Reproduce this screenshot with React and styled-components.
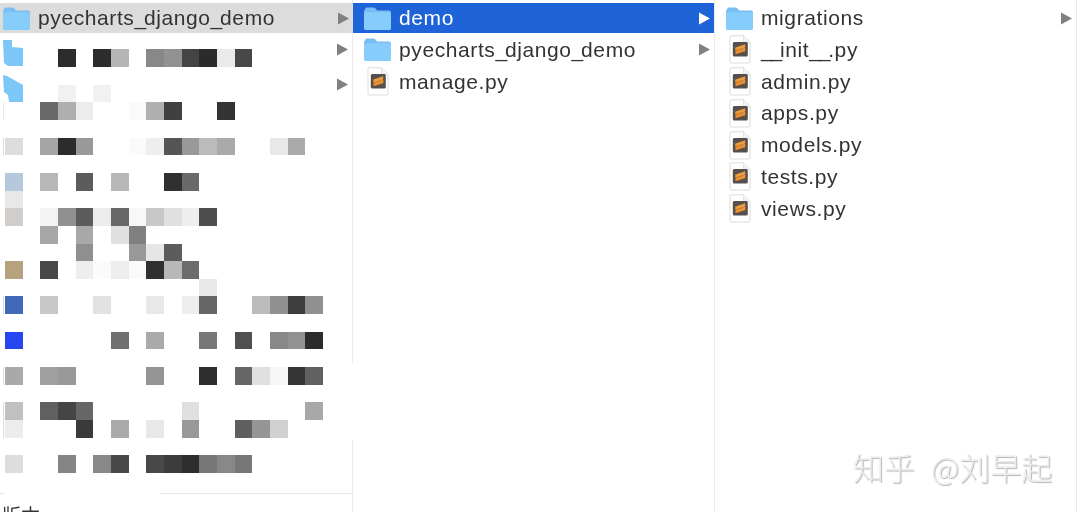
import React from "react";
import styled, { createGlobalStyle } from "styled-components";

const Global = createGlobalStyle`
  html, body { margin: 0; padding: 0; background: #fff; }
  #root { width: 1080px; height: 512px; overflow: hidden; }
`;

const Browser = styled.div`
  position: relative;
  display: flex;
  width: 1080px;
  height: 512px;
  overflow: hidden;
  background: #fff;
  font-family: "Liberation Sans", Arial, sans-serif;
  font-size: 21px;
  color: #333;
  filter: blur(0.4px);
`;

const Column = styled.div`
  flex: none;
  box-sizing: border-box;
  width: ${(p) => p.$width}px;
  padding-top: 3px;
  display: flex;
  flex-direction: column;
  gap: 1.75px;
  border-right: 1.5px solid #ececec;
`;

const LeftColumn = styled(Column)`
  gap: 0;
  border-right: none;
  background: linear-gradient(
      to bottom,
      #ececec 363px,
      transparent 363px,
      transparent 440px,
      #ececec 440px
    )
    right top / 1.5px 100% no-repeat;
`;

const Row = styled.div`
  flex: none;
  height: 30px;
  display: flex;
  align-items: center;
  gap: 8px;
  padding: 0 4px 0 ${(p) => (p.$tight ? 3 : 11)}px;
  background: ${(p) => (p.$state === "active" ? "#1f63d8" : p.$state === "muted" ? "#dcdcdc" : "transparent")};
  color: ${(p) => (p.$state === "active" ? "#fff" : "#333")};
`;

const Name = styled.span`
  flex: 1;
  white-space: nowrap;
  letter-spacing: 0.6px;
`;

const Under = styled.span`
  letter-spacing: -2.2px;
`;

const IconSlot = styled.span`
  flex: none;
  width: 27px;
  height: 30px;
  display: flex;
  align-items: center;
  justify-content: center;
`;

const Mosaic = styled.div`
  flex: none;
  display: grid;
  grid-template-columns: repeat(18, 17.67px) 1fr;
  grid-template-rows: 16.3px repeat(24, 17.67px);
  padding: 0 5px 0 5px;
`;

const Cell = styled.div`
  grid-row: ${(p) => p.$r + 2};
  grid-column: ${(p) => p.$c + 1};
  background: ${(p) => p.$color};
`;

const Tick = styled.div`
  grid-row: ${(p) => p.$r + 2};
  grid-column: 1;
  width: 1px;
  margin-left: -2px;
  background: ${(p) => p.$color || "#dcdcdc"};
  border-radius: 1px;
`;

const PartialFolder = styled.svg`
  grid-row: ${(p) => p.$from} / ${(p) => p.$to};
  grid-column: 1;
  align-self: end;
  margin-left: -2px;
  overflow: visible;
`;

const ArrowSlot = styled.div`
  grid-row: ${(p) => p.$from} / ${(p) => p.$to};
  grid-column: 19;
  justify-self: end;
  align-self: center;
  display: flex;
`;

const Divider = styled.div`
  flex: none;
  height: 1px;
  margin-top: 20px;
  background: linear-gradient(
    to right,
    #e6e6e6 5px,
    transparent 5px,
    transparent 160px,
    #e6e6e6 160px
  );
`;

const Footer = styled.div`
  flex: none;
  padding: 9px 0 0 2px;
  font-family: "Noto Sans CJK SC", sans-serif;
  font-size: 19px;
  line-height: 24px;
  color: #333;
`;

const Watermark = styled.div`
  position: absolute;
  left: 853px;
  top: 447px;
  font-family: "Noto Sans CJK SC", sans-serif;
  font-weight: 300;
  font-size: 31px;
  line-height: 40px;
  white-space: nowrap;
  color: #ececec;
  text-shadow: 1px 1px 1px #b4b4b4;
`;

const Gap = styled.span`
  display: inline-block;
  width: 16px;
`;

const Arrow = ({ color = "#808080" }) => (
  <svg width="11" height="13" viewBox="0 0 11 13">
    <path d="M0 0.5 L11 6.5 L0 12.5 Z" fill={color} />
  </svg>
);

const Folder = () => (
  <svg width="27" height="23" viewBox="0 0 27 23">
    <path
      d="M1 2.5 Q1 0.5 3 0.5 L9.5 0.5 Q11 0.5 12 2 L13 3.5 L25 3.5 Q27 3.5 27 5.5 L27 21 Q27 23 25 23 L2.5 23 Q0 23 0 20.5 L0 4 Z"
      fill="#78bef2"
    />
    <path d="M0 7 Q0 5.2 2 5.2 L25 5.2 Q27 5.2 27 7 L27 21 Q27 23 25 23 L2.5 23 Q0 23 0 20.5 Z" fill="#87cdfb" />
  </svg>
);

const PyFile = () => (
  <svg width="22" height="29" viewBox="0 0 22 29">
    <path
      d="M1 2 Q1 0.8 2.2 0.8 L14.5 0.8 L21 7.3 L21 26.8 Q21 28 19.8 28 L2.2 28 Q1 28 1 26.8 Z"
      fill="#fff"
      stroke="#dcdcdc"
      strokeWidth="1"
    />
    <path d="M14.5 0.8 L14.5 7.3 L21 7.3" fill="#f2f2f2" stroke="#dcdcdc" strokeWidth="0.8" />
    <rect x="3.8" y="7" width="15" height="14.5" rx="1.5" fill="#55504b" />
    <path d="M6.5 12.4 L16.2 9.3 L16.2 12.4 L6.5 15.4 Z" fill="#f09c3e" />
    <path d="M6.5 15.8 L16.2 12.8 L16.2 16.2 L6.5 19.2 Z" fill="#ea8f30" />
    <path d="M6.5 12.4 L10 14.2 L6.5 15.4 Z M16.2 12.8 L12.5 14 L16.2 16 Z" fill="#ec9434" />
  </svg>
);

const cells = [
  [0, 3, "#2c2c2c"], [0, 5, "#2c2c2c"], [0, 6, "#b5b5b5"], [0, 8, "#888"], [0, 9, "#929292"], [0, 10, "#444"], [0, 11, "#2b2b2b"], [0, 12, "#eaeaea"], [0, 13, "#484848"],
  [2, 3, "#f1f1f1"], [2, 5, "#f1f1f1"],
  [3, 2, "#696969"], [3, 3, "#afafaf"], [3, 4, "#ececec"], [3, 7, "#fafafa"], [3, 8, "#b0b0b0"], [3, 9, "#404040"], [3, 12, "#333"],
  [5, 0, "#ddd"], [5, 2, "#a5a5a5"], [5, 3, "#2c2c2c"], [5, 4, "#999"], [5, 7, "#fafafa"], [5, 8, "#eee"], [5, 9, "#555"], [5, 10, "#999"], [5, 11, "#bbb"], [5, 12, "#aaa"], [5, 15, "#e8e8e8"], [5, 16, "#aaa"],
  [7, 0, "#b6c9dc"], [7, 2, "#b8b8b8"], [7, 4, "#5c5c5c"], [7, 6, "#b8b8b8"], [7, 9, "#303030"], [7, 10, "#6a6a6a"],
  [8, 0, "#e8e8e8"],
  [9, 0, "#d1cdca"], [9, 2, "#f3f3f3"], [9, 3, "#909090"], [9, 4, "#5c5c5c"], [9, 5, "#ececec"], [9, 6, "#676767"], [9, 7, "#f8f8f8"], [9, 8, "#c8c8c8"], [9, 9, "#e0e0e0"], [9, 10, "#eee"], [9, 11, "#4e4e4e"],
  [10, 2, "#a6a6a6"], [10, 4, "#a8a8a8"], [10, 6, "#e0e0e0"], [10, 7, "#808080"],
  [11, 4, "#8f8f8f"], [11, 7, "#999"], [11, 8, "#e6e6e6"], [11, 9, "#5c5c5c"],
  [12, 0, "#b7a27f"], [12, 2, "#484848"], [12, 4, "#eee"], [12, 5, "#fbfbfb"], [12, 6, "#eee"], [12, 7, "#fafafa"], [12, 8, "#303030"], [12, 9, "#b8b8b8"], [12, 10, "#6c6c6c"],
  [13, 11, "#e8e8e8"],
  [14, 0, "#4269b8"], [14, 2, "#c8c8c8"], [14, 5, "#e2e2e2"], [14, 8, "#e8e8e8"], [14, 10, "#eee"], [14, 11, "#666"], [14, 14, "#bbb"], [14, 15, "#909090"], [14, 16, "#3d3d3d"], [14, 17, "#909090"],
  [16, 0, "#2646f0"], [16, 6, "#707070"], [16, 8, "#aaa"], [16, 11, "#777"], [16, 13, "#505050"], [16, 15, "#888"], [16, 16, "#929292"], [16, 17, "#2c2c2c"],
  [18, 0, "#a8aaaa"], [18, 2, "#a0a0a0"], [18, 3, "#999"], [18, 8, "#959595"], [18, 11, "#2e2e2e"], [18, 13, "#666"], [18, 14, "#e0e0e0"], [18, 15, "#f6f6f6"], [18, 16, "#353535"], [18, 17, "#606060"],
  [20, 0, "#c0c0c0"], [20, 2, "#606060"], [20, 3, "#454545"], [20, 4, "#666"], [20, 10, "#e0e0e0"], [20, 17, "#a8a8a8"],
  [21, 0, "#ececec"], [21, 4, "#3a3a3a"], [21, 6, "#aaa"], [21, 8, "#e8e8e8"], [21, 10, "#999"], [21, 13, "#5f5f5f"], [21, 14, "#959595"], [21, 15, "#d0d0d0"],
  [23, 0, "#ddd"], [23, 3, "#858585"], [23, 5, "#888"], [23, 6, "#484848"], [23, 8, "#484848"], [23, 9, "#3c3c3c"], [23, 10, "#2e2e2e"], [23, 11, "#777"], [23, 12, "#888"], [23, 13, "#777"],
];

const ticks = [[3, "#f4e4e4"], [5], [14], [18], [20], [21]];

const secondColumn = [
  { name: "demo", kind: "folder", state: "active" },
  { name: "pyecharts_django_demo", kind: "folder" },
  { name: "manage.py", kind: "file" },
];

const thirdColumn = [
  { name: "migrations", kind: "folder" },
  { name: "__init__.py", kind: "file" },
  { name: "admin.py", kind: "file" },
  { name: "apps.py", kind: "file" },
  { name: "models.py", kind: "file" },
  { name: "tests.py", kind: "file" },
  { name: "views.py", kind: "file" },
];

// The reference font has a narrower underscore than Liberation Sans.
const FileName = ({ children }) => (
  <Name>
    {children.split(/(_)/).map((part, i) =>
      part === "_" ? <Under key={i}>_</Under> : part
    )}
  </Name>
);

const Entry = ({ name, kind, state }) => (
  <Row $state={state}>
    <IconSlot>{kind === "folder" ? <Folder /> : <PyFile />}</IconSlot>
    <FileName>{name}</FileName>
    {kind === "folder" && <Arrow color={state === "active" ? "#fff" : "#808080"} />}
  </Row>
);

export default function App() {
  return (
    <>
      <Global />
      <Browser>
        <LeftColumn $width={353}>
          <Row $state="muted" $tight>
            <IconSlot>
              <Folder />
            </IconSlot>
            <FileName>pyecharts_django_demo</FileName>
            <Arrow />
          </Row>
          <Mosaic>
            <PartialFolder $from={1} $to={3} width="20" height="27" viewBox="0 0 20 27">
              <path d="M0 0 L9 0 L9 7 L20 8 L20 26 L5 26 L1 23 Z" fill="#7cc6f8" />
            </PartialFolder>
            <PartialFolder $from={3} $to={5} width="20" height="27" viewBox="0 0 20 27">
              <path d="M0 0 L4 1 L20 10 L20 27 L6 27 L5 20 L1 17 Z" fill="#7cc6f8" />
            </PartialFolder>
            <ArrowSlot $from={1} $to={3}>
              <Arrow />
            </ArrowSlot>
            <ArrowSlot $from={3} $to={5}>
              <Arrow />
            </ArrowSlot>
            {cells.map(([r, c, color]) => (
              <Cell key={`${r}-${c}`} $r={r} $c={c} $color={color} />
            ))}
            {ticks.map(([r, color]) => (
              <Tick key={r} $r={r} $color={color} />
            ))}
          </Mosaic>
          <Divider />
          <Footer>版本</Footer>
        </LeftColumn>
        <Column $width={362}>
          {secondColumn.map((item) => (
            <Entry key={item.name} {...item} />
          ))}
        </Column>
        <Column $width={362}>
          {thirdColumn.map((item) => (
            <Entry key={item.name} {...item} />
          ))}
        </Column>
        <Watermark>
          知乎<Gap />@刘早起
        </Watermark>
      </Browser>
    </>
  );
}
